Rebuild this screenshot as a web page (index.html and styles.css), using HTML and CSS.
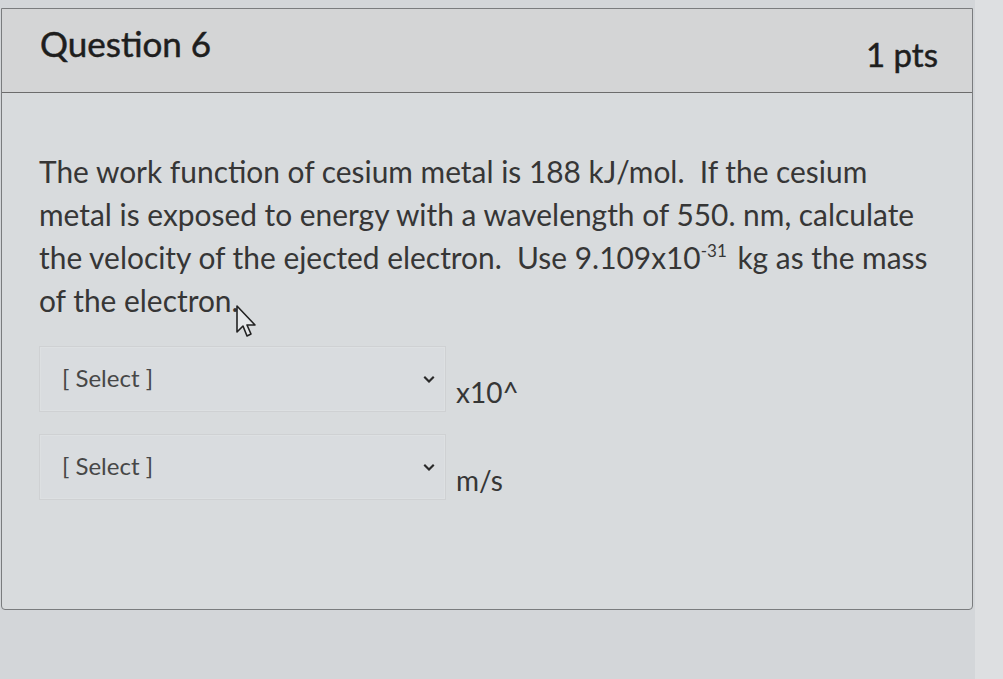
FILE: index.html
```html
<!DOCTYPE html>
<html lang="en">
<head>
<meta charset="utf-8">
<title>Question 6</title>
<link rel="stylesheet" href="styles.css">
</head>
<body>
<div class="page">
  <div class="question">
    <div class="q-header">
      <h2 class="q-title">Question 6</h2>
      <span class="q-pts">1 pts</span>
    </div>
    <div class="q-body">
      <p class="q-text">The work function of cesium metal is 188 kJ/mol.&nbsp; If the cesium<br>metal is exposed to energy with a wavelength of 550. nm, calculate<br>the velocity of the ejected electron.&nbsp; Use 9.109x10<sup>-31</sup> kg as the mass<br>of the electron.</p>
      <div class="answers">
        <div class="answer-row">
          <div class="select">
            <span class="select-text">[ Select ]</span>
            <svg class="chev" width="12" height="9" viewBox="0 0 12 9"><path d="M0.5 1.5 L2 0 L6 4 L10 0 L11.5 1.5 L6 7 Z" fill="#2a2a2a"/></svg>
          </div>
          <span class="unit">x10^</span>
        </div>
        <div class="answer-row">
          <div class="select">
            <span class="select-text">[ Select ]</span>
            <svg class="chev" width="12" height="9" viewBox="0 0 12 9"><path d="M0.5 1.5 L2 0 L6 4 L10 0 L11.5 1.5 L6 7 Z" fill="#2a2a2a"/></svg>
          </div>
          <span class="unit">m/s</span>
        </div>
      </div>
    </div>
  </div>
  <svg class="cursor" width="22" height="36" viewBox="0 0 22 36">
    <path d="M1 1 L1 27 L7 21 L11 31 L15 29 L11 20 L19 20 Z" fill="#e6e8ea" stroke="#222" stroke-width="1.6" stroke-linejoin="round"/>
  </svg>
</div>
</body>
</html>
```

FILE: styles.css
```css
html, body {
  margin: 0;
  padding: 0;
}

body {
  background: #d3d6d9;
  font-family: "Lato", "Open Sans", "Liberation Sans", sans-serif;
  color: #333;
}

.page {
  position: relative;
  width: 1003px;
  height: 679px;
  padding: 8px 0 0 1px;
  box-sizing: border-box;
  background: linear-gradient(90deg, #d3d6d9 0, #d3d6d9 975px, #dddfe1 975px);
}

.question {
  width: 972px;
  height: 602px;
  box-sizing: border-box;
  border: 1px solid #7a7c7e;
  border-radius: 0 0 4px 4px;
  background: #d8dbdd;
  display: flex;
  flex-direction: column;
}

.q-header {
  height: 84px;
  box-sizing: border-box;
  border-bottom: 1px solid #6c6c6c;
  background: #d4d5d6;
  display: flex;
  justify-content: space-between;
  align-items: flex-start;
  padding: 0 34px 0 38px;
}

.q-title {
  margin: 13px 0 0;
  font-size: 35px;
  font-weight: 400;
  line-height: 42px;
  color: #1e1e1e;
  -webkit-text-stroke: 0.5px #1e1e1e;
}

.q-pts {
  margin-top: 25px;
  font-size: 33px;
  line-height: 40px;
  color: #1e1e1e;
  -webkit-text-stroke: 0.5px #1e1e1e;
}

.q-body {
  padding: 57px 38px 0 37px;
}

.q-text {
  margin: 0;
  font-size: 29.9px;
  font-weight: 400;
  line-height: 43px;
  color: #363636;
  white-space: nowrap;
}

.q-text sup {
  font-size: 17px;
  line-height: 0;
  vertical-align: 0;
  position: relative;
  top: -12px;
  margin-right: 3px;
}

.answers {
  margin-top: 24px;
  display: flex;
  flex-direction: column;
  gap: 22px;
}

.answer-row {
  display: flex;
  align-items: flex-start;
}

.select {
  width: 407px;
  height: 66px;
  box-sizing: border-box;
  border: 1px solid #cfd1d3;
  box-shadow: inset 0 0 0 1px #dde0e2;
  background: #d9dcdf;
  display: flex;
  align-items: center;
  justify-content: space-between;
  padding: 0 10px 0 22px;
}

.select-text {
  font-size: 24px;
  font-weight: 400;
  line-height: 28px;
  color: #474747;
  margin-top: -3px;
}

.chev {
  display: block;
  margin-top: 2px;
}

.unit {
  margin: 31px 0 0 10px;
  font-size: 28px;
  font-weight: 400;
  line-height: 30px;
  color: #363636;
}

.cursor {
  position: absolute;
  left: 236px;
  top: 305px;
}
```
